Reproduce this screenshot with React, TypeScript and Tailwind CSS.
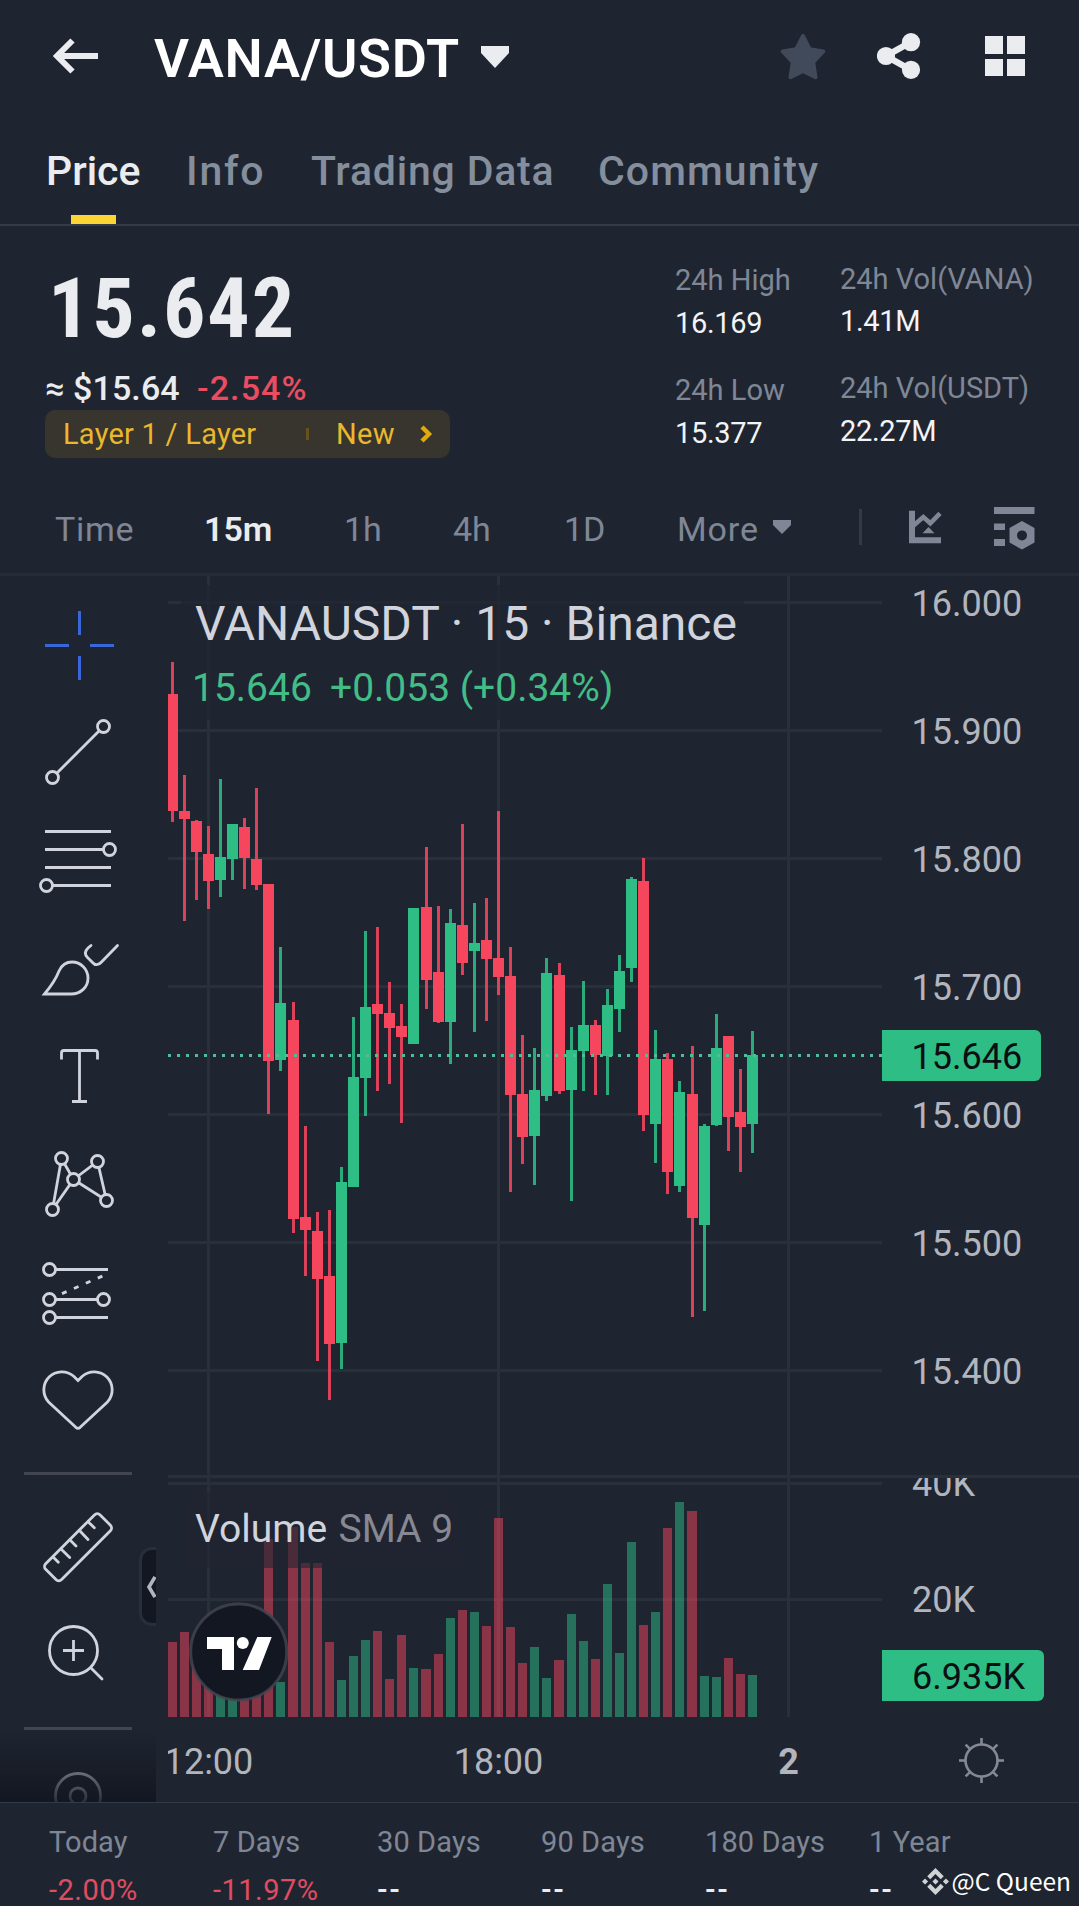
import React from "react";
import { SiBinance } from "react-icons/si";

const GREEN = "#2ebd85";
const RED = "#f6465d";
const GRID = "#2a303a";
const BG = "#1f2530";

/* [direction, wick top, body top, body bottom, wick bottom, volume top] */
type Candle = ["u" | "d", number, number, number, number, number];

const candles: Candle[] = [
  ["d", 662, 694, 811, 822, 1642],
  ["d", 775, 811, 819, 921, 1632],
  ["d", 820, 821, 852, 900, 1662],
  ["d", 826, 854, 881, 909, 1672],
  ["u", 779, 857, 880, 897, 1680],
  ["u", 824, 824, 859, 880, 1680],
  ["d", 818, 827, 858, 889, 1680],
  ["d", 788, 859, 885, 890, 1672],
  ["d", 884, 884, 1061, 1114, 1539],
  ["u", 947, 1003, 1060, 1071, 1682],
  ["d", 1002, 1020, 1219, 1233, 1527],
  ["d", 1126, 1217, 1230, 1276, 1563],
  ["d", 1212, 1231, 1279, 1361, 1563],
  ["d", 1210, 1276, 1344, 1400, 1642],
  ["u", 1167, 1182, 1343, 1369, 1680],
  ["u", 1017, 1077, 1187, 1187, 1656],
  ["u", 931, 1007, 1078, 1116, 1640],
  ["d", 927, 1004, 1014, 1091, 1631],
  ["d", 982, 1013, 1028, 1084, 1679],
  ["d", 1004, 1026, 1037, 1123, 1635],
  ["u", 908, 908, 1044, 1044, 1668],
  ["d", 847, 907, 980, 1009, 1669],
  ["d", 906, 972, 1022, 1023, 1654],
  ["u", 909, 923, 1022, 1064, 1618],
  ["d", 824, 925, 963, 975, 1610],
  ["u", 903, 943, 951, 1032, 1612],
  ["d", 898, 940, 959, 1021, 1626],
  ["d", 811, 958, 977, 995, 1518],
  ["d", 947, 976, 1095, 1192, 1627],
  ["d", 1035, 1094, 1137, 1164, 1663],
  ["u", 1048, 1090, 1136, 1185, 1647],
  ["u", 958, 973, 1096, 1101, 1678],
  ["d", 963, 975, 1091, 1094, 1660],
  ["u", 1027, 1050, 1090, 1201, 1614],
  ["u", 981, 1025, 1051, 1091, 1641],
  ["d", 1020, 1025, 1055, 1095, 1659],
  ["u", 989, 1005, 1056, 1095, 1584],
  ["u", 955, 971, 1009, 1032, 1653],
  ["u", 877, 879, 968, 982, 1542],
  ["d", 858, 881, 1115, 1131, 1625],
  ["u", 1030, 1059, 1124, 1163, 1612],
  ["d", 1053, 1059, 1172, 1194, 1528],
  ["u", 1081, 1092, 1186, 1192, 1502],
  ["d", 1046, 1094, 1218, 1317, 1511],
  ["u", 1124, 1126, 1225, 1311, 1676],
  ["u", 1014, 1048, 1125, 1126, 1677],
  ["d", 1036, 1036, 1117, 1151, 1658],
  ["d", 1069, 1112, 1127, 1172, 1674],
  ["u", 1031, 1055, 1124, 1153, 1675],
];

const bodyLeft = (i: number) => Math.round(202.93 + (i - 3) * 12.09);

const priceTicks: [string, number][] = [
  ["16.000", 602.5],
  ["15.900", 730.5],
  ["15.800", 858.5],
  ["15.700", 986.5],
  ["15.600", 1114.5],
  ["15.500", 1242.5],
  ["15.400", 1370.5],
];

function Chart() {
  return (
    <svg viewBox="156 576 923 1226" className="block h-[1226px] w-[923px] shrink-0" fontFamily="Roboto, sans-serif">
      <defs>
        <clipPath id="pane"><rect x="168" y="576" width="714" height="1141" /></clipPath>
        <clipPath id="volumeAxis"><rect x="882" y="1478" width="197" height="240" /></clipPath>
        <clipPath id="timeAxis"><rect x="168" y="1718" width="714" height="84" /></clipPath>
      </defs>

      <g clipPath="url(#pane)" shapeRendering="crispEdges">
        {priceTicks.map(([, y]) => <rect key={y} x="168" y={y - 1.5} width="714" height="3" fill={GRID} />)}
        <rect x="168" y="1482" width="714" height="3" fill={GRID} />
        <rect x="168" y="1598" width="714" height="3" fill={GRID} />
        {[207, 497, 787].map((x) => <rect key={x} x={x} y="576" width="3" height="1141" fill={GRID} />)}
        {candles.map(([dir, , , , , v], i) => {
          const wide = i % 11 === 10;
          return (
            <rect key={i} x={bodyLeft(i) + (wide ? 0 : 1)} y={v} width={wide ? 10 : 9} height={1717 - v}
              fill={dir === "u" ? GREEN : RED} fillOpacity={0.5} />
          );
        })}
        {candles.map(([dir, wt, bt, bb, wb], i) => (
          <g key={i} fill={dir === "u" ? GREEN : RED}>
            <rect x={bodyLeft(i) + 4} y={wt} width="3" height={wb - wt} fillOpacity={0.88} />
            <rect x={bodyLeft(i)} y={bt} width="11" height={bb - bt} />
          </g>
        ))}
      </g>
      <line x1="168" x2="882" y1="1055.5" y2="1055.5" stroke="#4fbd95" strokeWidth="3" strokeDasharray="3 6" />
      <rect x="168" y="1475" width="911" height="3" fill={GRID} />

      {/* legends */}
      <rect x="181" y="585" width="563" height="135" fill={BG} fillOpacity="0.7" />
      <text x="195" y="640" fontSize="48" fill="#d1d4dc">VANAUSDT · 15 · Binance</text>
      <text x="192" y="701" fontSize="39" fill="#42bd88">15.646</text>
      <text x="330" y="701" fontSize="39" fill="#42bd88">+0.053 (+0.34%)</text>
      <rect x="181" y="1492" width="279" height="76" fill={BG} fillOpacity="0.6" />
      <text x="195" y="1542" fontSize="39" fill="#d1d4dc">Volume</text>
      <text x="338.5" y="1542" fontSize="39" fill="#868993">SMA 9</text>

      {/* price axis */}
      <g fontSize="36" fill="#b2b5be">
        {priceTicks.map(([t, y]) => <text key={t} x="911.5" y={y + 13}>{t}</text>)}
        <g clipPath="url(#volumeAxis)">
          <text x="912" y="1496">40K</text>
          <text x="912" y="1612">20K</text>
        </g>
      </g>
      <path d="M882 1030H1035a6 6 0 0 1 6 6V1075a6 6 0 0 1-6 6H882Z" fill={GREEN} />
      <text x="911.500" y="1068.500" fontSize="36" fill="#0c0e12">15.646</text>
      <path d="M882 1650H1038a6 6 0 0 1 6 6V1695a6 6 0 0 1-6 6H882Z" fill={GREEN} />
      <text x="912" y="1688.500" fontSize="36" fill="#0c0e12">6.935K</text>

      {/* time axis */}
      <g clipPath="url(#timeAxis)" fontSize="36" textAnchor="middle" fill="#b2b5be">
        <text x="208.500" y="1774">12:00</text>
        <text x="498.500" y="1774">18:00</text>
        <text x="788.500" y="1774" fontWeight="700">2</text>
      </g>
      <g stroke="#868993" strokeWidth="2.6" fill="none">
        <circle cx="981.5" cy="1760.5" r="16" />
        {[0, 45, 90, 135, 180, 225, 270, 315].map((a) => (
          <path key={a} d="M997.5 1760.5h6.5" transform={`rotate(${a} 981.5 1760.5)`} />
        ))}
      </g>

      {/* TradingView badge */}
      <circle cx="238.7" cy="1652" r="48" fill="#131722" stroke="#434651" strokeOpacity="0.8" strokeWidth="3" />
      <path d="M207 1637h27v33h-12v-21h-15zM257.3 1637h14.4l-12.7 33h-16.3z" fill="#fff" />
      <circle cx="242.8" cy="1643" r="6" fill="#fff" />
    </svg>
  );
}

function Tool({ top, height = 107, color = "#d1d4dc", children }: {
  top: number; height?: number; color?: string; children: React.ReactNode;
}) {
  return (
    <svg viewBox={`0 ${top} 156 ${height}`} width="156" height={height} className="block shrink-0"
      fill="none" stroke={color} strokeWidth="2.8">
      {children}
    </svg>
  );
}

function Toolbar() {
  return (
    <div className="relative flex w-[156px] shrink-0 flex-col overflow-hidden pt-[15px]">
      <Tool top={591} color="#3a66dc">
        <path d="M79.5 611v24M79.5 656v24M45 645.5h24M90 645.5h24" strokeWidth="3" />
      </Tool>
      <Tool top={698}>
        <circle cx="52.5" cy="777.5" r="6" /><circle cx="103.5" cy="726.5" r="6" />
        <path d="M57 773L99 731" />
      </Tool>
      <Tool top={805}>
        <path d="M45 831.5h66M45 849.5h58M45 867.5h66M53 885.5h58" />
        <circle cx="109.5" cy="849.5" r="6" /><circle cx="46.5" cy="885.5" r="6" />
      </Tool>
      <Tool top={912}>
        <path d="M44.500 994C52 985 56 979 59 971C62 964.5 67 962 72 962A16 16 0 0 1 88 978C88 987 81 994 71 994Z" />
        <path d="M91 945.5L88 948C84.5 951.5 85 955 87.5 957.5L92.5 962.5C95 965.5 98.5 965.5 101.5 962L117.5 945.5" strokeLinecap="round" />
      </Tool>
      <Tool top={1019}>
        <path d="M61.5 1059.5V1053Q61.5 1050.5 64 1050.5H95Q97.5 1050.5 97.5 1053V1059.5M79.5 1050.5V1101M72 1101.5H87" />
      </Tool>
      <Tool top={1126}>
        <path d="M61.5 1158.5L73.5 1179.5L97.5 1161.5L106.5 1200.5L73.5 1179.5L52.5 1209.5Z" />
        <g fill={BG}>
          <circle cx="61.5" cy="1158.5" r="6" /><circle cx="97.5" cy="1161.5" r="6" />
          <circle cx="73.5" cy="1179.5" r="6" /><circle cx="52.5" cy="1209.5" r="6" />
          <circle cx="106.5" cy="1200.5" r="6" />
        </g>
      </Tool>
      <Tool top={1233}>
        <circle cx="49.5" cy="1269.5" r="6" /><circle cx="49.5" cy="1299.5" r="6" />
        <circle cx="103.5" cy="1299.5" r="6" /><circle cx="49.5" cy="1317.5" r="6" />
        <path d="M56 1269.5h52M56 1299.5h41M56 1317.5h52" />
        <path d="M62 1293.6L104 1275.4" strokeDasharray="5 8" />
      </Tool>
      <Tool top={1340}>
        <path d="M78 1380.500L73.7 1376.300A18 18 0 0 0 48.3 1401.700L75.8 1427.300Q78 1429.100 80.2 1427.300L107.7 1401.700A18 18 0 0 0 82.3 1376.300Z" />
      </Tool>
      <div className="mt-[25px] ml-6 h-[3px] w-[108px] shrink-0 bg-[#434651]" />
      <div className="h-[17px] shrink-0" />
      <Tool top={1492}>
        <rect x="39.5" y="1536" width="77" height="22.500" rx="4" transform="rotate(-45 78 1547.2)" />
        <path d="M53.3 1557.3l5 5M61 1549l8.7 8.5M70 1540l6 6M80 1531l8 8.5M88.3 1522l6 5.7" strokeLinecap="round" />
      </Tool>
      <Tool top={1599}>
        <circle cx="73.5" cy="1650.5" r="24" />
        <path d="M63 1650.5h21M73.5 1640v21" />
        <path d="M91 1668l11 11" strokeLinecap="round" />
      </Tool>
      <div className="mt-[21px] ml-6 h-[3px] w-[108px] shrink-0 bg-[#434651]" />
      <div className="h-[72px] shrink-0 bg-linear-to-b from-[#1f2530] to-[#131722]">
        <Tool top={1730} height={72} color="#4b4f59">
          <defs>
            <linearGradient id="eyeFade" x1="0" x2="0" y1="1772" y2="1802" gradientUnits="userSpaceOnUse">
              <stop offset="0" stopColor="#6a6e78" />
              <stop offset="1" stopColor="#2c303b" />
            </linearGradient>
          </defs>
          <g stroke="url(#eyeFade)">
            <circle cx="78" cy="1796" r="22.5" /><circle cx="78" cy="1796" r="8" />
          </g>
        </Tool>
      </div>
      <div className="absolute top-[971px] -right-[3px] flex h-[79px] w-[20px] items-center rounded-l-[13px] border-[3px] border-[#2a2e39] bg-[#131722]">
        <svg width="14" height="24" viewBox="0 0 14 24" className="ml-[2px] shrink-0">
          <path d="M11 2L5 12l6 10" fill="none" stroke="#b2b5be" strokeWidth="3.6" />
        </svg>
      </div>
    </div>
  );
}

function Header() {
  return (
    <header className="flex h-[117px] shrink-0 items-center text-[#eaecef]">
      <svg width="50" height="40" viewBox="50 36 50 40" className="-mt-[5px] ml-[50px] shrink-0">
        <path d="M98 56H57M72.5 40.5L57 56l15.5 15.5" fill="none" stroke="currentColor" strokeWidth="6" />
      </svg>
      <h1 className="ml-[54px] w-[327px] shrink-0 text-[54px] font-[560] tracking-[0.7px] text-white">VANA/USDT</h1>
      <svg width="28" height="22" viewBox="0 0 28 22" className="-mt-[3px] shrink-0">
        <path d="M0 0h28v7L14 22 0 7z" fill="currentColor" />
      </svg>
      <svg width="46" height="48" viewBox="780 33 46 48" className="-mt-[3px] ml-[271px] shrink-0">
        <path d="M803 36l6.8 13.3 13.4 2.2-10 10.7 2.3 15-12.5-6.2-12.5 6.2 2.3-15-10-10.7 13.4-2.2z"
          fill="#414a5a" stroke="#414a5a" strokeWidth="4" strokeLinejoin="round" />
      </svg>
      <svg width="44" height="48" viewBox="877 32 44 48" className="-mt-[5px] ml-[51px] shrink-0">
        <path d="M911 42L886 56l25 14" fill="none" stroke="currentColor" strokeWidth="6.5" />
        <g fill="currentColor"><circle cx="886" cy="56" r="9.1" /><circle cx="911" cy="42.2" r="9.1" /><circle cx="911" cy="69.8" r="9.1" /></g>
      </svg>
      <div className="-mt-[5px] ml-[64px] grid h-10 w-10 shrink-0 grid-cols-2 grid-rows-2 gap-x-1 gap-y-[5px]">
        <i className="bg-current" /><i className="bg-current" /><i className="bg-current" /><i className="bg-current" />
      </div>
    </header>
  );
}

function Tabs() {
  return (
    <nav className="flex h-[109px] shrink-0 items-stretch border-b-2 border-[#333b47] pl-[46px] text-[41px] leading-[109px] font-medium text-[#848e9c]">
      <div className="relative w-[140px] text-[#eaecef]">
        Price
        <div className="absolute bottom-0 left-[25px] h-[9px] w-[45px] bg-[#fcd535]" />
      </div>
      <div className="w-[125px] tracking-[1.8px]">Info</div>
      <div className="w-[287px] tracking-[0.8px]">Trading Data</div>
      <div className="tracking-[1.1px]">Community</div>
    </nav>
  );
}

function Stat({ label, value, gap }: { label: string; value: string; gap: string }) {
  return (
    <div className={`flex flex-col ${gap}`}>
      <span className="text-[#7f8796]">{label}</span>
      <span className="font-[450] tracking-[-0.3px] text-[#f2f4f7]">{value}</span>
    </div>
  );
}

function Summary() {
  return (
    <section className="flex h-[261px] shrink-0 pl-[45px]">
      <div className="flex w-[630px] shrink-0 flex-col items-start pt-[35px]">
        <div className="ml-[3px] text-[84px] leading-[96px] font-bold font-stretch-semi-condensed tracking-[1.9px] text-[#eaecef]">15.642</div>
        <div className="mt-[11px] flex text-[34px] leading-10 font-medium">
          <span className="w-[152px] tracking-[0.1px] text-[#eaecef]">≈ $15.64</span>
          <span className="tracking-[1.1px] text-[#ea4d62]">-2.54%</span>
        </div>
        <div className="mt-[2px] flex h-12 w-[405px] items-center rounded-[10px] bg-[#37352d] pl-[18px] text-[29px] text-[#eab72d]">
          <span className="mt-[2px] w-[243px] tracking-[0.25px]">Layer 1 / Layer</span>
          <span className="h-3 w-[3px] bg-[#66511f]" />
          <span className="mt-[2px] ml-[27px] w-[84px] tracking-[0.4px]">New</span>
          <svg width="13" height="18" viewBox="0 0 13 18"><path d="M2 2l7 7-7 7" fill="none" stroke="#e0a90f" strokeWidth="4.4" /></svg>
        </div>
      </div>
      <div className="flex w-[165px] shrink-0 flex-col gap-[33px] pt-[37px] text-[29px] leading-[34px] whitespace-nowrap">
        <Stat label="24h High" value="16.169" gap="gap-[9px]" />
        <Stat label="24h Low" value="15.377" gap="gap-[9px]" />
      </div>
      <div className="flex flex-col gap-[33px] pt-9 text-[29px] leading-[34px] whitespace-nowrap">
        <Stat label="24h Vol(VANA)" value="1.41M" gap="gap-2" />
        <Stat label="24h Vol(USDT)" value="22.27M" gap="gap-[9px]" />
      </div>
    </section>
  );
}

function Intervals() {
  return (
    <div className="flex h-[86px] shrink-0 items-center pl-[55px] text-[34px] text-[#7f8796] *:shrink-0">
      <span className="-mt-[2px] w-[149px] tracking-[0.7px]">Time</span>
      <span className="-mt-[2px] w-[140px] font-semibold text-[#eaecef]">15m</span>
      <span className="-mt-[2px] w-[109px]">1h</span>
      <span className="-mt-[2px] w-[111px]">4h</span>
      <span className="-mt-[2px] w-[113px]">1D</span>
      <span className="-mt-[2px] w-[96px] tracking-[0.9px]">More</span>
      <svg width="18" height="14" viewBox="0 0 18 14" className="-mt-[6px]"><path d="M0 0h18v5l-9 9-9-9z" fill="currentColor" /></svg>
      <div className="-mt-[6px] ml-[68px] h-9 w-[3px] bg-[#343b47]" />
      <svg width="34" height="34" viewBox="909 510 34 34" className="-mt-[7px] ml-[47px]" fill="none" stroke="currentColor">
        <path d="M912 510.7V540.2H941" strokeWidth="6" />
        <path d="M913 526l10.3-9 7 6.3 9.7-10" strokeWidth="4.6" />
        <path d="M928.5 527l6 6.3h-12z" fill="currentColor" stroke="none" />
      </svg>
      <svg width="42" height="44" viewBox="993 506 42 44" className="-mt-[5px] ml-[50px]" fill="currentColor">
        <path d="M994 507h40.5v7H994zM994 523.5h11v6.5h-11zM994 539h11v7h-11z" />
        <path fillRule="evenodd" d="M1022 521l12.5 7v14.5l-12.5 7-12.5-7V528zM1022 530.4a5 5 0 1 0 0 10a5 5 0 1 0 0-10z" />
      </svg>
    </div>
  );
}

const periods = [
  ["Today", "-2.00%"],
  ["7 Days", "-11.97%"],
  ["30 Days", "--"],
  ["90 Days", "--"],
  ["180 Days", "--"],
  ["1 Year", "--"],
];

function Footer() {
  return (
    <footer className="relative flex h-[104px] shrink-0 border-t border-[#333b47] pt-[25px] pl-[49px] text-[29px] leading-[29px]">
      {periods.map(([label, value]) => (
        <div key={label} className="flex w-[164px] shrink-0 flex-col gap-[19px]">
          <span className="tracking-[0.1px] text-[#7f8796]">{label}</span>
          <span className={value === "--" ? "font-semibold tracking-[1.5px] text-[#eaecef]" : "tracking-[0.5px] text-[#e04c60]"}>{value}</span>
        </div>
      ))}
      <div className="absolute top-[62px] right-[8px] flex h-8 items-center gap-[3px] text-[24.5px] leading-8 text-white">
        <SiBinance className="size-[27px] text-[#d0d2d5]" />
        <span className="font-['Noto_Sans_CJK_SC',sans-serif]">@C Queen</span>
      </div>
    </footer>
  );
}

export default function App() {
  return (
    <div className="flex h-[1906px] w-[1079px] flex-col overflow-hidden bg-[#1f2530] font-[Roboto,sans-serif]">
      <Header />
      <Tabs />
      <Summary />
      <Intervals />
      <div className="h-[3px] shrink-0 bg-[#262c37]" />
      <main className="flex h-[1226px] shrink-0">
        <Toolbar />
        <Chart />
      </main>
      <Footer />
    </div>
  );
}
